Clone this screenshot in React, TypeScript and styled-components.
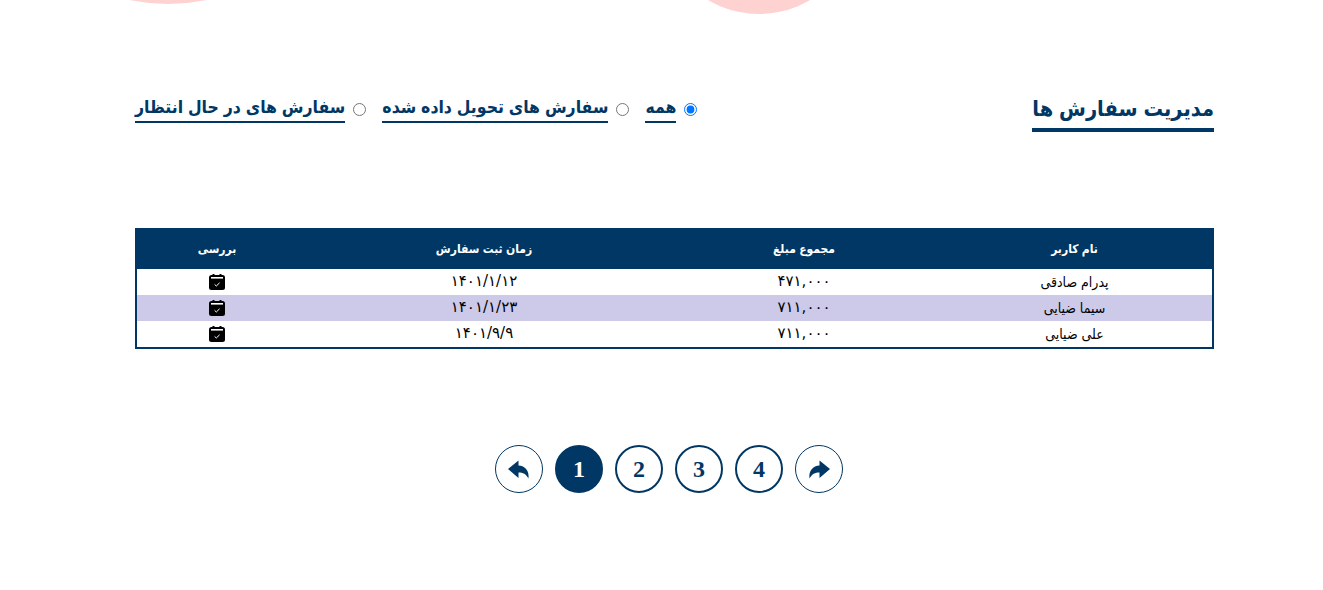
import { createGlobalStyle, styled } from 'styled-components'

const navy = '#003764'

const GlobalStyle = createGlobalStyle`
  html, body {
    margin: 0;
    padding: 0;
    background: #fff;
    font-family: "Liberation Sans", "DejaVu Sans Condensed", "DejaVu Sans", Arial, sans-serif;
  }
`

const Page = styled.div`
  position: relative;
  height: 590px;
  overflow: hidden;
  padding: 95px 109px 0 135px;
  box-sizing: border-box;
`

const Blob = styled.div<{ $left: number; $top: number; $size: number }>`
  position: absolute;
  left: ${(p) => p.$left}px;
  top: ${(p) => p.$top}px;
  width: ${(p) => p.$size}px;
  height: ${(p) => p.$size}px;
  border-radius: 50%;
  background: #ffd2d2;
`

const Header = styled.header`
  display: flex;
  justify-content: space-between;
  align-items: flex-start;
  direction: rtl;
  height: 133px;
`

const Title = styled.h1`
  margin: 0;
  font-size: 21.6px;
  line-height: 27px;
  font-weight: 700;
  color: ${navy};
  border-bottom: 4px solid ${navy};
  padding-bottom: 6px;
`

const Filters = styled.form`
  display: flex;
  align-items: center;
  gap: 16px;
  height: 28px;
`

const FilterLabel = styled.label`
  display: flex;
  align-items: center;
  gap: 8px;
`

const Radio = styled.input`
  margin: 0;
  width: 13px;
  height: 13px;
`

const FilterText = styled.span`
  font-size: 17.5px;
  line-height: 24px;
  padding-bottom: 2px;
  font-weight: 700;
  color: ${navy};
  border-bottom: 2px solid ${navy};
  white-space: nowrap;
`

const Table = styled.table`
  width: 100%;
  direction: rtl;
  border-collapse: separate;
  border-spacing: 0;
  border: 2px solid ${navy};
  table-layout: fixed;
`

const HeadCell = styled.th<{ $width: number }>`
  width: ${(p) => p.$width}px;
  height: 39px;
  padding: 0 0 2px;
  box-sizing: border-box;
  background: ${navy};
  color: #fff;
  font-size: 12px;
  font-weight: 700;
  text-align: center;
`

const Row = styled.tr<{ $shaded?: boolean }>`
  background: ${(p) => (p.$shaded ? '#cdc9e9' : '#fff')};
`

const Cell = styled.td`
  height: 26px;
  padding: 0;
  box-sizing: border-box;
  font-size: 14px;
  color: #000;
  text-align: center;
`

const NumberCell = styled(Cell)`
  font-family: "DejaVu Sans", sans-serif;
  font-size: 15px;
  padding-bottom: 3px;
`

const IconCell = styled(Cell)`
  line-height: 0;
`

const CheckIcon = styled.svg`
  width: 16px;
  height: 16px;
`

const Pagination = styled.nav`
  display: flex;
  justify-content: center;
  gap: 12px;
  margin-top: 96px;
  padding-right: 11px;
`

const PageButton = styled.button<{ $active?: boolean; $thin?: boolean }>`
  width: 48px;
  height: 48px;
  padding: 0;
  display: flex;
  align-items: center;
  justify-content: center;
  border-radius: 50%;
  border: ${(p) => (p.$thin ? 1 : 2)}px solid ${navy};
  background: ${(p) => (p.$active ? navy : '#fff')};
  color: ${(p) => (p.$active ? '#fff' : navy)};
  font-family: "Liberation Serif", "Times New Roman", serif;
  font-size: 24px;
  font-weight: 700;
  box-sizing: border-box;
`

const ArrowSvg = styled.svg<{ $flip?: boolean }>`
  width: 28px;
  height: 28px;
  transform: ${(p) => (p.$flip ? 'scaleX(-1)' : 'none')};
`

const ArrowIcon = ({ flip }: { flip?: boolean }) => (
  <ArrowSvg $flip={flip} viewBox="0 0 28 28" aria-hidden="true">
    <path
      d="M3 14 L13.5 5.5 V10.5 C20 10.5 24.5 16 23.5 23.5 C21 19 18 17.5 13.5 17.5 V23 Z"
      fill="currentColor"
    />
  </ArrowSvg>
)

const ReviewIcon = () => (
  <CheckIcon viewBox="0 0 16 16" aria-hidden="true">
    <rect x="0" y="1" width="16" height="15" rx="2.5" fill="#000" />
    <rect x="3.5" y="0" width="2" height="3" fill="#000" />
    <rect x="10.5" y="0" width="2" height="3" fill="#000" />
    <rect x="2" y="3" width="12" height="1.6" fill="#fff" />
    <path d="M5.6 10.4 L7.3 12 L10.6 8.8" fill="none" stroke="#fff" strokeWidth="1" />
  </CheckIcon>
)

const filters = [
  { label: 'همه', checked: true },
  { label: 'سفارش های تحویل داده شده', checked: false },
  { label: 'سفارش های در حال انتظار', checked: false },
]

const columns = [
  { label: 'نام کاربر', width: 275 },
  { label: 'مجموع مبلغ', width: 266 },
  { label: 'زمان ثبت سفارش', width: 374 },
  { label: 'بررسی', width: 160 },
]

const orders = [
  { name: 'پدرام صادقی', total: '۴۷۱,۰۰۰', date: '۱۴۰۱/۱/۱۲' },
  { name: 'سیما ضیایی', total: '۷۱۱,۰۰۰', date: '۱۴۰۱/۱/۲۳' },
  { name: 'علی ضیایی', total: '۷۱۱,۰۰۰', date: '۱۴۰۱/۹/۹' },
]

export default function App() {
  return (
    <>
      <GlobalStyle />
      <Page>
        <Blob $left={-15} $top={-362} $size={366} />
        <Blob $left={659} $top={-186} $size={200} />
        <Header>
          <Title>مدیریت سفارش ها</Title>
          <Filters>
            {filters.map((f) => (
              <FilterLabel key={f.label}>
                <Radio type="radio" name="status" defaultChecked={f.checked} />
                <FilterText>{f.label}</FilterText>
              </FilterLabel>
            ))}
          </Filters>
        </Header>
        <Table>
          <thead>
            <tr>
              {columns.map((c) => (
                <HeadCell key={c.label} $width={c.width}>
                  {c.label}
                </HeadCell>
              ))}
            </tr>
          </thead>
          <tbody>
            {orders.map((o, i) => (
              <Row key={o.name} $shaded={i === 1}>
                <Cell>{o.name}</Cell>
                <NumberCell>{o.total}</NumberCell>
                <NumberCell>{o.date}</NumberCell>
                <IconCell>
                  <ReviewIcon />
                </IconCell>
              </Row>
            ))}
          </tbody>
        </Table>
        <Pagination>
          <PageButton $thin aria-label="previous">
            <ArrowIcon />
          </PageButton>
          <PageButton $active>1</PageButton>
          <PageButton>2</PageButton>
          <PageButton>3</PageButton>
          <PageButton>4</PageButton>
          <PageButton $thin aria-label="next">
            <ArrowIcon flip />
          </PageButton>
        </Pagination>
      </Page>
    </>
  )
}
